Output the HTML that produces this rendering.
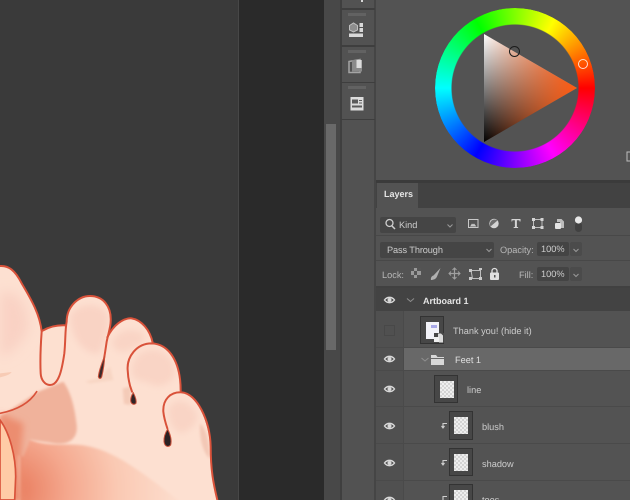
<!DOCTYPE html>
<html><head><meta charset="utf-8"><style>
html,body{margin:0;padding:0;width:630px;height:500px;overflow:hidden;background:#383838}
div,svg{position:absolute}
#w{left:0;top:0;width:630px;height:500px;overflow:hidden;filter:blur(.35px)}
.t{position:absolute;font:9.2px/12px "Liberation Sans",sans-serif;text-rendering:geometricPrecision;color:#cdcdcd;white-space:nowrap}
.check{background:repeating-conic-gradient(#d4d4d4 0 25%,#eeeeee 0 50%) 0 0/4px 4px}
</style></head><body><div id="w">
<svg style="left:0;top:0" width="630" height="500" viewBox="0 0 630 500">
<defs>
<g id="eye"><path d="M1 5C3.500 1.500 8.500 1.500 11 5C8.500 8.500 3.500 8.500 1 5Z" fill="none" stroke="#d8d8d8" stroke-width="1.400"/><circle cx="6" cy="5" r="2" fill="#d8d8d8"/></g>
<filter id="b3" x="-30%" y="-30%" width="160%" height="160%"><feGaussianBlur stdDeviation="4"/></filter>
<filter id="b8" x="-40%" y="-40%" width="180%" height="180%"><feGaussianBlur stdDeviation="10"/></filter>
<filter id="b16" x="-50%" y="-50%" width="200%" height="200%"><feGaussianBlur stdDeviation="18"/></filter>
<radialGradient id="low" gradientUnits="userSpaceOnUse" cx="40" cy="720" r="520"><stop offset="0" stop-color="#e8795a"/><stop offset=".3" stop-color="#f4a68c"/><stop offset=".6" stop-color="#fac9b3"/><stop offset="1" stop-color="#fde0d1"/></radialGradient>
<clipPath id="sil"><path d="M0 48C25 46 45 60 65 100C95 150 120 195 125 245C145 232 170 225 198 226C200 170 235 138 270 138C310 138 335 170 332 215L325 250C345 222 370 203 395 205C425 210 450 240 458 278C500 282 540 330 542 424C590 430 625 510 632 590C632 660 640 700 652 750H0Z"/></clipPath>
</defs>
<rect x="0" y="0" width="238" height="500" fill="#3a3a3a"/>
<rect x="238" y="0" width="1" height="500" fill="#474747"/>
<rect x="239" y="0" width="85" height="500" fill="#2a2a2a"/>
<rect x="324" y="0" width="16" height="500" fill="#484848"/>
<rect x="326" y="124" width="10" height="226" fill="#696969"/>
<rect x="340" y="0" width="2" height="500" fill="#3f3f3f"/>
<rect x="342" y="0" width="32" height="500" fill="#525252"/>
<rect x="374" y="0" width="2" height="500" fill="#454545"/>
<rect x="376" y="0" width="254" height="500" fill="#535353"/>
<g fill="#3e3e3e"><rect x="341" y="8" width="34" height="2"/><rect x="341" y="45" width="34" height="2"/><rect x="341" y="82" width="34" height="1"/><rect x="341" y="119" width="34" height="1"/></g>
<g fill="#626262"><rect x="348" y="13" width="18" height="3"/><rect x="348" y="50" width="18" height="3"/><rect x="348" y="86" width="18" height="3"/></g>
<!-- tool icons -->
<rect x="361" y="0" width="2" height="2" fill="#d8d8d8"/>
<path d="M349.500 25.500l4-2.500 4 2.500v4.500l-4 2-4-2z" fill="#8e8e8e" stroke="#c0c0c0"/>
<g fill="#d8d8d8"><rect x="359.500" y="23" width="3.500" height="4"/><rect x="359.500" y="28" width="3.500" height="4"/><rect x="349" y="33.500" width="14" height="3.500"/></g>
<path d="M349 61.500l11-2v13h-11z" fill="none" stroke="#a4a4a4" stroke-width="1.500"/><rect x="352" y="60" width="10" height="11.500" fill="#8a8a8a"/><rect x="356.500" y="60" width="5" height="8" fill="#dcdcdc"/>
<rect x="350.500" y="97" width="13" height="13.500" fill="#dcdcdc"/><rect x="352" y="99.500" width="6" height="4" fill="#5a5a5a"/><rect x="359" y="100" width="3" height="1" fill="#5a5a5a"/><rect x="359" y="102.500" width="3" height="1" fill="#5a5a5a"/><rect x="352" y="105.500" width="10" height="2" fill="#5a5a5a"/>
<rect x="627" y="152" width="4" height="9" fill="none" stroke="#bdbdbd"/>
<!-- layers header -->
<rect x="376" y="180" width="254" height="3" fill="#3b3b3b"/>
<rect x="376" y="183" width="254" height="25" fill="#424242"/>
<rect x="377" y="183" width="41" height="25" fill="#535353"/>
<g fill="#484848"><rect x="376" y="235" width="254" height="1"/><rect x="376" y="260" width="254" height="1"/></g>
<rect x="380" y="217" width="76" height="16" rx="2" fill="#454545"/>
<rect x="380" y="242" width="114" height="16" rx="2" fill="#454545"/>
<rect x="537" y="242" width="32" height="14" rx="2" fill="#444444"/><rect x="570" y="242" width="12" height="14" rx="2" fill="#4b4b4b"/>
<rect x="537" y="267" width="32" height="14" rx="2" fill="#444444"/><rect x="570" y="267" width="12" height="14" rx="2" fill="#4b4b4b"/>
<g fill="none" stroke="#9a9a9a" stroke-width="1"><path d="M447.500 224.500l2.500 2.500 2.500-2.500M486.500 249l2.500 2.500 2.500-2.500M573.500 249l2.500 2.500 2.500-2.500M573.500 274l2.500 2.500 2.500-2.500"/></g>
<circle cx="389.500" cy="223" r="3.500" fill="none" stroke="#cfcfcf" stroke-width="1.300"/><path d="M392 226l3 3" stroke="#cfcfcf" stroke-width="1.500"/>
<!-- filter icons -->
<rect x="468.500" y="219.500" width="9.500" height="8" fill="none" stroke="#c8c8c8"/><path d="M470 226.500l2-3 1 1 1-1 2.500 3z" fill="#c8c8c8"/>
<circle cx="494" cy="223.500" r="4.700" fill="#d4d4d4"/><path d="M490.500 226.500l7-6a4.700 4.700 0 0 0-7 6z" fill="#707070"/>
<path d="M511.500 219h9v2.500h-.8l-.4-1.300h-2.400v6.800h1.200v1h-4.400v-1h1.200v-6.800h-2.400l-.4 1.300h-.6z" fill="#d4d4d4"/>
<rect x="533.500" y="219.500" width="8.500" height="8" fill="none" stroke="#bdbdbd"/><g fill="#d4d4d4"><rect x="532" y="218" width="3" height="3"/><rect x="540.500" y="218" width="3" height="3"/><rect x="532" y="226" width="3" height="3"/><rect x="540.500" y="226" width="3" height="3"/></g>
<path d="M557 219h4.500l2.500 2.500v6.500h-4v-6h-3z" fill="#bdbdbd"/><rect x="555" y="223" width="6" height="6" rx="1" fill="#e4e4e4"/>
<rect x="575" y="222" width="7" height="10" rx="3.500" fill="#414141"/><circle cx="578.500" cy="220" r="3.600" fill="#e8e8e8"/>
<!-- lock icons -->
<rect x="411" y="268" width="10" height="10" fill="#9a9a9a"/><g fill="#555"><rect x="411" y="268" width="3" height="3"/><rect x="417" y="268" width="4" height="3"/><rect x="414" y="271" width="3" height="4"/><rect x="411" y="275" width="3" height="3"/><rect x="417" y="275" width="4" height="3"/></g>
<path d="M431 280c-.5-2 .5-4 2.500-4.500l7-7.500-3.500 8.500c-1 2.500-3.500 3.500-6 3.500z" fill="#b0b0b0"/>
<path d="M454.500 268v11M449 273.500h11" stroke="#a0a0a0" stroke-width="1.200"/><path d="M452.500 270l2-2 2 2M452.500 277l2 2 2-2M451 271.500l-2 2 2 2M458 271.500l2 2-2 2" fill="none" stroke="#a0a0a0"/>
<path d="M471 270.500h9.500v8h-8z" fill="none" stroke="#bdbdbd"/><rect x="469" y="269" width="3" height="3" fill="#c8c8c8"/><rect x="479" y="277" width="3" height="3" fill="#c8c8c8"/><rect x="469" y="277" width="3" height="3" fill="#c8c8c8"/><rect x="479" y="268" width="3" height="2" fill="#c8c8c8"/>
<rect x="490" y="272.500" width="9" height="7.500" rx="1" fill="#e0e0e0"/><path d="M492 272.500v-1.500a2.500 2.500 0 0 1 5 0v1.500" fill="none" stroke="#e0e0e0" stroke-width="1.300"/><rect x="494" y="275" width="1.500" height="2.500" fill="#555"/>
<!-- rows -->
<rect x="376" y="286" width="254" height="2" fill="#414141"/>
<rect x="376" y="288" width="254" height="23" fill="#434343"/>
<rect x="376" y="311" width="27" height="189" fill="#505050"/>
<rect x="404" y="348" width="226" height="22" fill="#686868"/>
<g fill="#4a4a4a"><rect x="376" y="347" width="254" height="1"/><rect x="376" y="370" width="254" height="1"/><rect x="376" y="406" width="254" height="1"/><rect x="376" y="443" width="254" height="1"/><rect x="376" y="480" width="254" height="1"/></g>
<rect x="403" y="311" width="1" height="189" fill="#4a4a4a"/>
<use href="#eye" x="383.500" y="295"/><use href="#eye" x="383.500" y="354"/><use href="#eye" x="383.500" y="384"/><use href="#eye" x="383.500" y="421"/><use href="#eye" x="383.500" y="458"/><use href="#eye" x="383.500" y="495"/>
<rect x="384.500" y="325.500" width="10" height="10" fill="none" stroke="#484848"/>
<path d="M407 298.500l3.500 3 3.500-3M421.500 358l3.500 3 3.500-3" fill="none" stroke="#8f8f8f"/>
<path d="M431 355h5l1.500 2h6.500v8h-13z" fill="#d8d8d8"/><path d="M431 358.500h13" stroke="#686868"/>
<!-- thumbs -->
<rect x="420.500" y="316.500" width="23" height="27" fill="#474747" stroke="#333"/>
<rect x="426" y="322" width="13" height="17" fill="#f2f2f8"/>
<rect x="431" y="325" width="6" height="3" fill="#a8a8e8"/>
<rect x="434" y="333" width="10" height="10" fill="#474747"/><path d="M438 333.500h3l2 2v7h-4v-4h-1z" fill="#dcdcdc"/><rect x="434" y="337" width="5" height="5" fill="#f0f0f0"/>
<rect x="434.500" y="375.500" width="23" height="27" fill="#474747" stroke="#333"/>
<rect x="449.500" y="411.500" width="23" height="28" fill="#474747" stroke="#333"/>
<rect x="449.500" y="448.500" width="23" height="27" fill="#474747" stroke="#333"/>
<rect x="449.500" y="484.500" width="23" height="20" fill="#474747" stroke="#333"/>
<g fill="none" stroke="#cfcfcf" stroke-width="1.100"><path d="M447 423.500h-4v4M441.500 426l1.500 2 1.500-2M447 460.500h-4v4M441.500 463l1.500 2 1.500-2M447 496.500h-4v4"/></g>
<!-- foot -->
<g transform="translate(0,250) scale(.33333)">
<g clip-path="url(#sil)">
<rect x="0" y="0" width="720" height="750" fill="#fde0d1"/>
<path d="M85 565C130 590 180 580 240 585C340 595 430 670 560 770H60V565Z" fill="url(#low)" filter="url(#b3)"/>
<path d="M0 500L115 425L190 395C215 430 225 480 230 525C235 570 200 590 150 578L90 570L70 620L0 600Z" fill="#f0b29b" filter="url(#b3)"/>
<path d="M0 490L70 520L60 640L70 760H0Z" fill="#ec8d6f" filter="url(#b8)"/>
<path d="M600 520C625 540 630 600 628 625C612 610 597 570 600 520Z" fill="#f3c8b6" filter="url(#b3)"/>
<path d="M255 395L295 385L330 350L340 390L270 400Z" fill="#f8d5c3" filter="url(#b3)"/>
<path d="M368 415L392 410L392 465L372 462Z" fill="#f4cbb8" filter="url(#b3)"/>
<!-- toe pads -->
<path d="M0 130C50 110 90 170 85 240C60 290 20 320 0 320Z" fill="#f9d2c4" filter="url(#b16)"/>
<path d="M210 200C225 160 300 150 325 195C330 240 310 290 295 312C250 310 215 270 210 200Z" fill="#f9d3c4" filter="url(#b8)"/>
<path d="M335 280C350 240 390 230 430 250C440 265 430 285 395 295C370 315 345 305 335 280Z" fill="#f9d4c5" filter="url(#b8)"/>
<path d="M395 365C395 320 430 295 470 300C505 310 530 340 525 375C510 405 470 420 440 395C415 395 395 385 395 365Z" fill="#f9d4c5" filter="url(#b8)"/>
<path d="M505 480C515 445 560 440 590 490C600 520 565 545 540 550C515 535 505 510 505 480Z" fill="#f9d4c5" filter="url(#b8)"/>
<path d="M0 370L35 366C30 375 15 378 0 382Z" fill="#f7cbb5"/>
</g>
<!-- toe 2 fill -->
<path d="M128 242C145 232 170 225 196 226L192 310C185 370 175 405 150 405C130 405 122 380 122 350C122 310 125 280 128 242Z" fill="#fde0d0"/>
<!-- left lower toe -->
<path d="M0 510C30 550 47 620 47 680L44 750H0Z" fill="#ffcba6" stroke="#d9523a" stroke-width="5"/>
<g fill="none" stroke="#d9523a" stroke-width="6" stroke-linecap="round">
<path d="M0 48C25 46 45 60 65 100C95 150 120 195 125 245C122 285 120 330 122 370C123 390 135 405 150 405C175 405 185 365 193 310C197 270 195 240 200 215C200 170 235 138 270 138C310 138 335 170 332 215C332 230 325 250 320 275C315 310 310 345 302 378"/>
<path d="M128 242C145 232 170 225 196 226"/>
<path d="M0 490C40 482 85 465 110 425" stroke-width="5"/>
<path d="M322 262C340 225 370 203 395 205C425 210 450 240 458 278"/>
<path d="M542 422C542 340 510 282 455 280C410 280 380 320 383 360C384 385 388 405 396 425"/>
<path d="M652 750C640 700 632 660 632 590C630 510 590 430 545 427C510 425 488 450 490 485C492 505 497 520 502 535"/>
</g>
<path d="M295 380C297 362 305 340 314 318C313 345 309 365 305 381C302 387 297 387 295 380Z" fill="#3d2a2a" stroke="#c9503a" stroke-width="3"/>
<path d="M400 428C406 440 410 452 408 460C402 466 393 462 392 452C392 442 395 435 400 428Z" fill="#302526" stroke="#c9503a" stroke-width="3"/>
<path d="M503 537C512 555 516 570 512 585C505 593 494 590 492 575C491 560 496 548 503 537Z" fill="#2b2224" stroke="#c9503a" stroke-width="3"/>
</g>
</svg>
<!-- checker thumbs -->
<div class="check" style="left:440px;top:381px;width:14px;height:17px"></div>
<div class="check" style="left:454px;top:417px;width:14px;height:17px"></div>
<div class="check" style="left:454px;top:454px;width:14px;height:17px"></div>
<div class="check" style="left:454px;top:490px;width:14px;height:10px"></div>
<!-- color wheel -->
<div style="left:435px;top:8px;width:160px;height:160px;border-radius:50%;background:conic-gradient(from 90deg,#f00 0deg,#f0f 60deg,#00f 120deg,#0ff 180deg,#0f0 240deg,#ff0 300deg,#f00 360deg);-webkit-mask:radial-gradient(circle,transparent 63px,#000 64px);mask:radial-gradient(circle,transparent 63px,#000 64px)"></div>
<div style="left:484px;top:34px;width:93px;height:108px;clip-path:polygon(0 0,100% 50%,0 100%);background:linear-gradient(90deg,rgba(255,90,16,0),#ff5a10),linear-gradient(#fff,#000)"></div>
<div style="left:509px;top:46px;width:9px;height:9px;border:1px solid #1c1c1c;border-radius:50%"></div>
<div style="left:578px;top:59px;width:8px;height:8px;border:1px solid #ffe0d0;border-radius:50%"></div>
<!-- text -->
<div class="t" style="left:384px;top:188px;color:#e6e6e6;font-weight:bold;font-size:9px">Layers</div>
<div class="t" style="left:399px;top:219px">Kind</div>
<div class="t" style="left:387px;top:244px;letter-spacing:-.1px">Pass Through</div>
<div class="t" style="left:500px;top:244px;color:#b8b8b8">Opacity:</div>
<div class="t" style="left:541px;top:243px">100%</div>
<div class="t" style="left:382px;top:269px;color:#b8b8b8">Lock:</div>
<div class="t" style="left:519px;top:269px;color:#b8b8b8">Fill:</div>
<div class="t" style="left:541px;top:268px">100%</div>
<div class="t" style="left:423px;top:295px;color:#e6e6e6;font-weight:bold;font-size:9px">Artboard 1</div>
<div class="t" style="left:453px;top:325px">Thank you! (hide it)</div>
<div class="t" style="left:455px;top:354px;color:#e0e0e0">Feet 1</div>
<div class="t" style="left:467px;top:384px">line</div>
<div class="t" style="left:482px;top:421px">blush</div>
<div class="t" style="left:482px;top:458px">shadow</div>
<div class="t" style="left:482px;top:494px">toes</div>
</div></body></html>
